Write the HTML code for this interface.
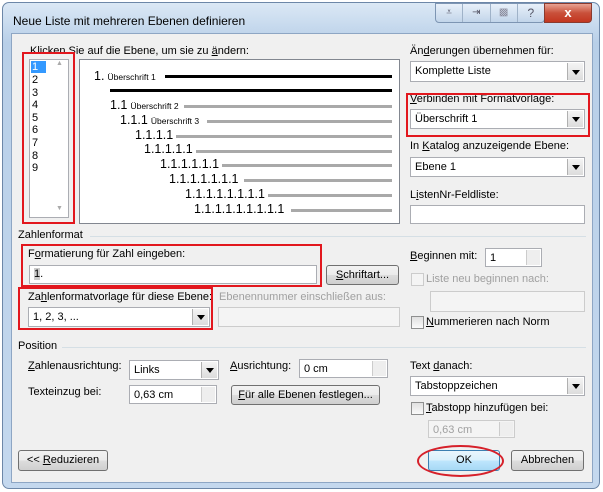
<!DOCTYPE html>
<html><head><meta charset="utf-8"><style>
*{box-sizing:border-box;margin:0;padding:0}
body{width:603px;height:492px;background:#fff;font-family:"Liberation Sans",sans-serif;font-size:11px;color:#000;position:relative;overflow:hidden}
.a{position:absolute;white-space:nowrap}
.frame{left:2px;top:2px;width:598px;height:487px;border:1px solid #6d87a8;border-radius:7px;background:linear-gradient(#dbe8f5,#b8cfe8 40px,#c4d8ee);}
.inner{left:11px;top:33px;width:582px;height:450px;background:#f0f0f0;border:1px solid #8ea6c4}
.box{background:#fff;border:1px solid #abadb3}
.cb{background:#fff;border:1px solid #abadb3;padding:3px 4px;line-height:13px}
.dd{position:absolute;right:1px;top:1px;bottom:1px;width:16px;background:linear-gradient(#f4f4f4,#dcdcdc);border-left:1px solid #b0b0b0}
.dd:after{content:"";position:absolute;left:4px;top:50%;margin-top:-2px;border:4px solid transparent;border-top:5px solid #000;border-bottom:0}
.sp{position:absolute;right:1px;top:1px;bottom:1px;width:14px;background:#eee;border-left:1px solid #ccc}
.btn{border:1px solid #707070;border-radius:3px;background:linear-gradient(#f2f2f2,#ebebeb 50%,#dddddd 51%,#cfcfcf);text-align:center;line-height:19px}
.red{border:2px solid #e2171e}
.dis{color:#a0a0a0}
.chk{width:13px;height:13px;border:1px solid #8e8f8f;background:linear-gradient(#e0e0e0,#fafafa)}
.gl{height:3px;background:#a9a9a9}
.bl{height:3px;background:#000}
.n{font-size:12.5px}
.s{font-size:8.5px}
u{text-decoration:underline}
</style></head><body>
<div class="a frame"></div>
<div class="a" style="left:13px;top:14px;font-size:12px">Neue Liste mit mehreren Ebenen definieren</div>
<div class="a" style="left:435px;top:3px;width:110px;height:20px;border:1px solid #7d95b3;border-radius:0 0 4px 4px;background:linear-gradient(#e8f0f9,#c2d5ea);display:flex">
<div style="flex:1;border-right:1px solid #9fb2c8;text-align:center;font-size:10px;line-height:18px;color:#556">⩡</div>
<div style="flex:1;border-right:1px solid #9fb2c8;text-align:center;font-size:10px;line-height:18px;color:#556">⇥</div>
<div style="flex:1;border-right:1px solid #9fb2c8;text-align:center;font-size:10px;line-height:18px;color:#889">▩</div>
<div style="flex:1;text-align:center;font-size:12px;line-height:18px;color:#556">?</div></div>
<div class="a" style="left:544px;top:3px;width:48px;height:20px;border:1px solid #8a3a2e;border-radius:0 0 4px 0;background:linear-gradient(#e8a393,#c9503a 50%,#c3361f);color:#fff;text-align:center;font-weight:bold;line-height:18px;font-size:13px">x</div>
<div class="a inner"></div>

<div class="a" style="left:30px;top:45px">Klicken Sie auf die Ebene, um sie zu <u>ä</u>ndern:</div>
<div class="a box" style="left:29px;top:59px;width:40px;height:159px"></div>
<div class="a" style="left:31px;top:61px;width:15px;height:12px;background:#3399ff;color:#fff;line-height:12px;padding-left:1px">1</div>
<div class="a" style="left:32px;top:74px;line-height:12.6px">2<br>3<br>4<br>5<br>6<br>7<br>8<br>9</div>
<div class="a" style="left:56px;top:60px;font-size:7px;color:#aaa">▲</div>
<div class="a" style="left:56px;top:205px;font-size:7px;color:#aaa">▼</div>
<div class="a red" style="left:22px;top:52px;width:53px;height:172px"></div>

<div class="a box" style="left:79px;top:59px;width:321px;height:165px;border-color:#828790"></div>
<div class="a" style="left:94px;top:69px"><span class="n">1.</span> <span class="s">Überschrift 1</span></div>
<div class="a bl" style="left:165px;top:75px;width:227px"></div>
<div class="a bl" style="left:110px;top:89px;width:282px"></div>
<div class="a" style="left:110px;top:98px"><span class="n">1.1</span> <span class="s">Überschrift 2</span></div>
<div class="a gl" style="left:184px;top:105px;width:208px"></div>
<div class="a" style="left:120px;top:113px"><span class="n">1.1.1</span> <span class="s">Überschrift 3</span></div>
<div class="a gl" style="left:207px;top:120px;width:185px"></div>
<div class="a n" style="left:135px;top:128px">1.1.1.1</div><div class="a gl" style="left:176px;top:135px;width:216px"></div>
<div class="a n" style="left:144px;top:142px">1.1.1.1.1</div><div class="a gl" style="left:196px;top:150px;width:196px"></div>
<div class="a n" style="left:160px;top:157px">1.1.1.1.1.1</div><div class="a gl" style="left:222px;top:164px;width:170px"></div>
<div class="a n" style="left:169px;top:172px">1.1.1.1.1.1.1</div><div class="a gl" style="left:244px;top:179px;width:148px"></div>
<div class="a n" style="left:185px;top:187px">1.1.1.1.1.1.1.1</div><div class="a gl" style="left:268px;top:194px;width:124px"></div>
<div class="a n" style="left:194px;top:202px">1.1.1.1.1.1.1.1.1</div><div class="a gl" style="left:291px;top:209px;width:101px"></div>

<div class="a" style="left:410px;top:45px">Än<u>d</u>erungen übernehmen für:</div>
<div class="a cb" style="left:410px;top:61px;width:175px;height:21px">Komplette Liste<div class="dd"></div></div>
<div class="a" style="left:410px;top:93px"><u>V</u>erbinden mit Formatvorlage:</div>
<div class="a cb" style="left:410px;top:109px;width:175px;height:20px">Überschrift 1<div class="dd"></div></div>
<div class="a red" style="left:406px;top:93px;width:184px;height:44px"></div>
<div class="a" style="left:410px;top:140px">In <u>K</u>atalog anzuzeigende Ebene:</div>
<div class="a cb" style="left:410px;top:157px;width:175px;height:20px">Ebene 1<div class="dd"></div></div>
<div class="a" style="left:410px;top:189px">L<u>i</u>stenNr-Feldliste:</div>
<div class="a box" style="left:410px;top:205px;width:175px;height:19px"></div>

<div class="a" style="left:18px;top:229px">Zahlenformat</div>
<div class="a" style="left:90px;top:236px;width:496px;height:1px;background:#d5dfe5"></div>
<div class="a" style="left:28px;top:248px">F<u>o</u>rmatierung für Zahl eingeben:</div>
<div class="a cb" style="left:29px;top:265px;width:288px;height:19px;padding-top:2px"><span style="background:#ccc">1</span>.</div>
<div class="a red" style="left:21px;top:244px;width:301px;height:43px"></div>
<div class="a btn" style="left:326px;top:265px;width:73px;height:20px"><u>S</u>chriftart...</div>
<div class="a" style="left:410px;top:250px"><u>B</u>eginnen mit:</div>
<div class="a cb" style="left:485px;top:248px;width:57px;height:19px">1<div class="sp"></div></div>
<div class="a chk" style="left:411px;top:273px;border-color:#ccc;background:#f4f4f4"></div>
<div class="a dis" style="left:426px;top:273px">Liste neu beginnen nach:</div>
<div class="a cb" style="left:430px;top:291px;width:155px;height:21px;background:#f4f4f4;border-color:#ccc"></div>
<div class="a chk" style="left:411px;top:316px"></div>
<div class="a" style="left:426px;top:316px"><u>N</u>ummerieren nach Norm</div>
<div class="a" style="left:28px;top:291px">Za<u>h</u>lenformatvorlage für diese Ebene:</div>
<div class="a cb" style="left:28px;top:307px;width:182px;height:20px">1, 2, 3, ...<div class="dd"></div></div>
<div class="a red" style="left:18px;top:287px;width:195px;height:43px"></div>
<div class="a dis" style="left:219px;top:291px">Ebenennummer einschließen aus:</div>
<div class="a cb" style="left:218px;top:307px;width:182px;height:20px;background:#f4f4f4;border-color:#ccc"></div>

<div class="a" style="left:18px;top:340px">Position</div>
<div class="a" style="left:62px;top:347px;width:524px;height:1px;background:#d5dfe5"></div>
<div class="a" style="left:28px;top:360px"><u>Z</u>ahlenausrichtung:</div>
<div class="a cb" style="left:129px;top:360px;width:90px;height:20px">Links<div class="dd"></div></div>
<div class="a" style="left:230px;top:360px"><u>A</u>usrichtung:</div>
<div class="a cb" style="left:299px;top:359px;width:89px;height:19px">0 cm<div class="sp"></div></div>
<div class="a" style="left:28px;top:386px">Texteinzu<u>g</u> bei:</div>
<div class="a cb" style="left:129px;top:385px;width:88px;height:19px">0,63 cm<div class="sp"></div></div>
<div class="a btn" style="left:231px;top:385px;width:149px;height:20px"><u>F</u>ür alle Ebenen festlegen...</div>
<div class="a" style="left:410px;top:360px">Text <u>d</u>anach:</div>
<div class="a cb" style="left:410px;top:376px;width:175px;height:20px">Tabstoppzeichen<div class="dd"></div></div>
<div class="a chk" style="left:411px;top:402px"></div>
<div class="a" style="left:426px;top:402px"><u>T</u>abstopp hinzufügen bei:</div>
<div class="a cb dis" style="left:428px;top:420px;width:87px;height:18px;background:#f4f4f4;border-color:#ccc">0,63 cm<div class="sp"></div></div>

<div class="a btn" style="left:18px;top:450px;width:90px;height:21px">&lt;&lt; <u>R</u>eduzieren</div>
<div class="a btn" style="left:428px;top:450px;width:72px;height:21px;border-color:#3c7fb1;background:linear-gradient(#eaf6fd,#d9f0fc 50%,#bee6fd 51%,#a7d9f5)">OK</div>
<div class="a" style="left:417px;top:445px;width:87px;height:32px;border:2px solid #d6202a;border-radius:50%"></div>
<div class="a btn" style="left:511px;top:450px;width:73px;height:21px">Abbrechen</div>
</body></html>
